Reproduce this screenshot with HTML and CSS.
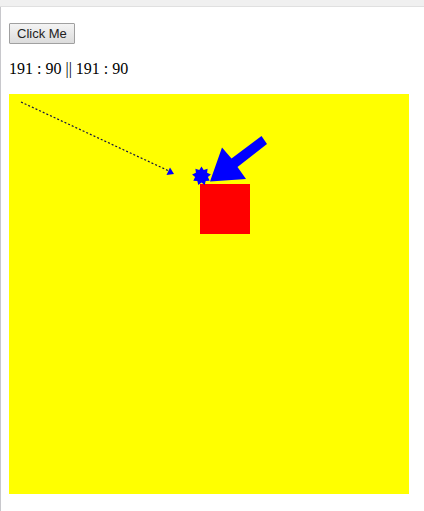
FILE: index.html
```
<!DOCTYPE html>
<html>

<head>
  <meta charset="utf-8">
  <title>Click Me</title>
  <link rel="stylesheet" href="styles.css">
</head>

<body>
  <div class="top-bar"></div>
  <div class="page">
    <button type="button" class="move-btn">Click Me</button>
    <p class="position">191 : 90 || 191 : 90</p>

    <svg class="container" viewBox="0 0 400 400">
      <!-- moving box -->
      <rect class="box" x="191" y="90" width="50" height="50" />

      <!-- path of the box -->
      <line class="path-line" x1="12" y1="8" x2="160" y2="77" />
      <polygon class="marker" points="161,73.5 165,80 157.5,81" />

      <!-- end point -->
      <polygon class="marker" points="192.5,72.5 194.7,75.9 198.6,74.7 198.1,78.7 201.9,80.4 198.9,83.1 200.7,86.8 196.7,87 195.7,90.9 192.5,88.5 189.3,90.9 188.3,87 184.3,86.8 186.1,83.1 183.1,80.4 186.9,78.7 186.4,74.7 190.3,75.9" />
      <polygon class="marker" points="201,87.5 213,53.5 222.5,64.5 252.5,42 258,50 228.5,73 237,85" />
    </svg>
  </div>
</body>

</html>
```

FILE: styles.css
```
body {
  margin: 0;
  background-color: #fff;
  color: #000;
  font-family: "Liberation Serif", "Times New Roman", serif;
  font-size: 16px;
}

.top-bar {
  height: 6px;
  background-color: #f0f0f0;
  border-bottom: 1px solid #e0e0e0;
}

.page {
  min-height: calc(100vh - 7px);
  box-sizing: border-box;
  padding: 16px 15px 16px 8px;
  border-left: 1px solid #c8c8cc;
}

.move-btn {
  display: block;
  height: 21px;
  padding: 0 7px;
  border: 1px solid #a0a0a0;
  border-radius: 1px;
  background: linear-gradient(#f4f4f4, #dcdcdc);
  color: #222;
  font-family: "Liberation Sans", Arial, sans-serif;
  font-size: 13px;
  line-height: 19px;
}

.position {
  margin: 16px 0;
  line-height: 18px;
}

.container {
  display: block;
  width: 100%;
  background-color: #ff0;
}

.box {
  fill: #f00;
}

.path-line {
  stroke: #114;
  stroke-width: 1.2;
  stroke-dasharray: 2 2;
}

.marker {
  fill: #00f;
}
```
